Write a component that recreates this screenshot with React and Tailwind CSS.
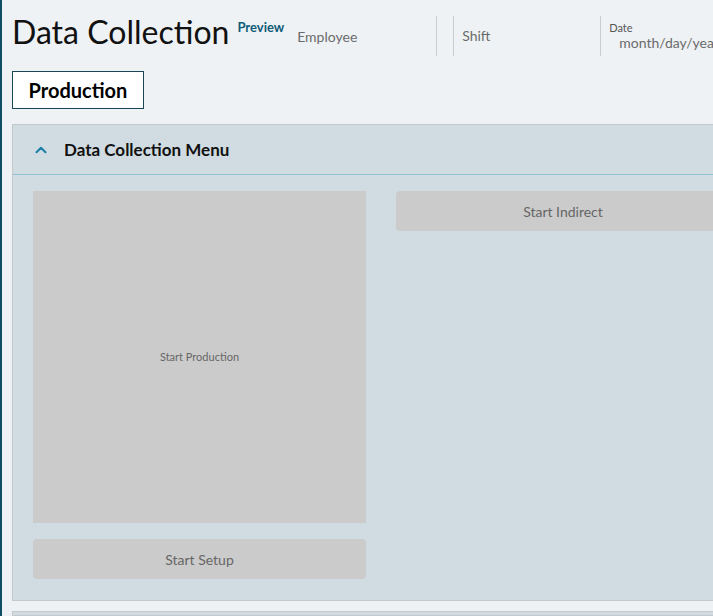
import { ChevronUp } from 'lucide-react';

function Field({ label, placeholder, className }) {
  return (
    <div className={`flex h-[40px] flex-col justify-center border-l border-[#c9cccf] pl-[8px] ${className}`}>
      {label && <span className="text-[11px] leading-[13px] text-[#555]">{label}</span>}
      <span className={`text-[14px] leading-[18px] text-[#6b6b6b] ${label ? 'pl-[10px]' : ''}`}>{placeholder}</span>
    </div>
  );
}

export default function App() {
  return (
    <div
      className="flex h-[616px] w-[713px] overflow-hidden bg-[#eef2f5]"
      style={{ fontFamily: '"Source Sans Pro", Lato, "Noto Sans", sans-serif' }}
    >
      <div className="w-[2px] shrink-0 bg-[#0e4f66]" />

      <div className="flex w-[760px] shrink-0 flex-col pl-[10px]">
        <div className="flex h-[60px] items-start pt-[10px]">
          <h1 className="mt-[2px] text-[32px] leading-[40px] text-[#111]">Data Collection</h1>
          <span className="ml-[8px] mt-[8px] text-[13px] font-bold text-[#0f5c78]">Preview</span>
          <div className="ml-[13px] mt-[6px] flex">
            <div className="flex h-[40px] w-[139px] items-center">
              <span className="text-[14px] text-[#6b6b6b]">Employee</span>
            </div>
            <div className="h-[40px] w-[17px] border-l border-[#c9cccf]" />
            <Field placeholder="Shift" className="w-[147px]" />
            <Field label="Date" placeholder="month/day/year" className="w-[160px]" />
          </div>
        </div>

        <div className="mt-[15px]">
          <button className="h-[38px] w-[132px] border border-[#1b4658] bg-white text-[20px] font-bold text-black">
            Production
          </button>
        </div>

        <div className="mt-[15px] w-[739px] border border-[#c5c9cc] bg-[#d0dce1]">
          <div className="flex h-[50px] items-center border-b border-[#8fc3d3] pl-[19px]">
            <ChevronUp size={18} strokeWidth={2.75} className="text-[#1e7fa8]" />
            <span className="ml-[14px] text-[17px] font-bold text-[#111]">Data Collection Menu</span>
          </div>
          <div className="flex gap-[30px] px-[20px] pb-[21px] pt-[16px]">
            <div className="flex w-[333px] flex-col gap-[16px]">
              <div className="flex h-[332px] items-center justify-center bg-[#cbcbcb] text-[11px] text-[#666]">
                Start Production
              </div>
              <div className="flex h-[40px] items-center justify-center rounded-[4px] bg-[#cbcbcb] text-[14px] text-[#666]">
                Start Setup
              </div>
            </div>
            <div className="flex-1">
              <div className="flex h-[40px] items-center justify-center rounded-[4px] bg-[#cbcbcb] text-[14px] text-[#666]">
                Start Indirect
              </div>
            </div>
          </div>
        </div>

        <div className="mt-[10px] h-[40px] w-[739px] border border-[#c5c9cc] bg-[#d0dce1]" />
      </div>
    </div>
  );
}
